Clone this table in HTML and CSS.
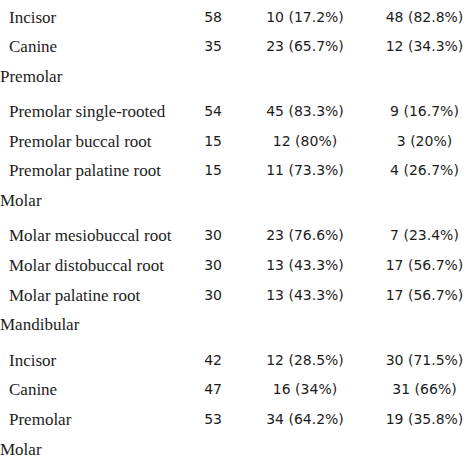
FILE: index.html
```html
<!DOCTYPE html>
<html>
<head>
<meta charset="utf-8">
<link rel="stylesheet" href="styles.css">
</head>
<body>
<table class="data">
  <colgroup>
    <col class="c-label">
    <col class="c-n">
    <col class="c-a">
    <col class="c-b">
  </colgroup>
  <tbody>
    <tr class="sub"><td class="label">Incisor</td><td class="n">58</td><td class="v">10 (17.2%)</td><td class="v">48 (82.8%)</td></tr>
    <tr class="sub"><td class="label">Canine</td><td class="n">35</td><td class="v">23 (65.7%)</td><td class="v">12 (34.3%)</td></tr>
    <tr class="head"><td class="label">Premolar</td><td></td><td></td><td></td></tr>
    <tr class="sub"><td class="label">Premolar single-rooted</td><td class="n">54</td><td class="v">45 (83.3%)</td><td class="v">9 (16.7%)</td></tr>
    <tr class="sub"><td class="label">Premolar buccal root</td><td class="n">15</td><td class="v">12 (80%)</td><td class="v">3 (20%)</td></tr>
    <tr class="sub"><td class="label">Premolar palatine root</td><td class="n">15</td><td class="v">11 (73.3%)</td><td class="v">4 (26.7%)</td></tr>
    <tr class="head"><td class="label">Molar</td><td></td><td></td><td></td></tr>
    <tr class="sub"><td class="label">Molar mesiobuccal root</td><td class="n">30</td><td class="v">23 (76.6%)</td><td class="v">7 (23.4%)</td></tr>
    <tr class="sub"><td class="label">Molar distobuccal root</td><td class="n">30</td><td class="v">13 (43.3%)</td><td class="v">17 (56.7%)</td></tr>
    <tr class="sub"><td class="label">Molar palatine root</td><td class="n">30</td><td class="v">13 (43.3%)</td><td class="v">17 (56.7%)</td></tr>
    <tr class="head"><td class="label">Mandibular</td><td></td><td></td><td></td></tr>
    <tr class="sub"><td class="label">Incisor</td><td class="n">42</td><td class="v">12 (28.5%)</td><td class="v">30 (71.5%)</td></tr>
    <tr class="sub"><td class="label">Canine</td><td class="n">47</td><td class="v">16 (34%)</td><td class="v">31 (66%)</td></tr>
    <tr class="sub"><td class="label">Premolar</td><td class="n">53</td><td class="v">34 (64.2%)</td><td class="v">19 (35.8%)</td></tr>
    <tr class="head"><td class="label">Molar</td><td></td><td></td><td></td></tr>
  </tbody>
</table>
</body>
</html>
```

FILE: styles.css
```css
html, body {
  margin: 0;
  padding: 0;
  background: #ffffff;
}

body {
  color: #1c1c1c;
  padding-top: 2.5px;
}

.data {
  border-collapse: collapse;
  border-spacing: 0;
  table-layout: fixed;
  width: 469px;
}

.c-label { width: 190px; }
.c-n { width: 40px; }
.c-a { width: 150px; }
.c-b { width: 89px; }

.data td {
  padding: 0;
  height: 29.7px;
  line-height: 29.5px;
  vertical-align: top;
  white-space: nowrap;
}

.label {
  font-family: "Liberation Serif", "Times New Roman", serif;
  font-size: 17px;
}

.sub .label {
  padding-left: 9px;
}

.head td {
  height: 35.2px;
}

.n {
  font-family: "DejaVu Sans", Verdana, sans-serif;
  font-size: 14px;
  text-align: right;
  padding-right: 8px !important;
}

.v {
  font-family: "DejaVu Sans", Verdana, sans-serif;
  font-size: 14px;
  text-align: center;
}
```
